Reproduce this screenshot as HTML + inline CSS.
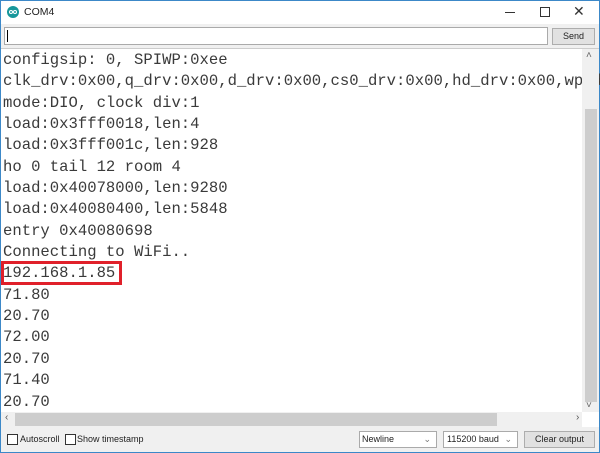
<!DOCTYPE html>
<html><head><style>
*{margin:0;padding:0;box-sizing:border-box}
body{width:600px;height:453px;overflow:hidden;background:#fff;font-family:"Liberation Sans",sans-serif;position:relative}
.win{position:absolute;left:0;top:0;width:600px;height:453px;border:1px solid #3c88c8;border-top:1px solid #3c88c8}
.abs{position:absolute}
.out{position:absolute;left:3px;top:50px;font-family:"Liberation Mono",monospace;font-size:15.6px;line-height:21.35px;color:#3a3a3a;white-space:pre}
</style></head><body>
<div class="win"></div>
<div class="abs" style="left:1px;top:1px;width:598px;height:23px;background:#fff"></div>
<div class="abs" style="left:7px;top:6px;width:12px;height:12px;border-radius:50%;background:#17979b"></div>
<div class="abs" style="left:9px;top:10px;width:4px;height:4px;border:1px solid #fff;border-radius:50%"></div>
<div class="abs" style="left:13px;top:10px;width:4px;height:4px;border:1px solid #fff;border-radius:50%"></div>
<div class="abs" style="left:24px;top:6px;font-size:10.5px;color:#222">COM4</div>
<div class="abs" style="left:505px;top:12px;width:10px;height:1px;background:#333"></div>
<div class="abs" style="left:540px;top:7px;width:10px;height:10px;border:1px solid #333"></div>
<div class="abs" style="left:573px;top:3px;font-size:14px;color:#333">✕</div>
<div class="abs" style="left:1px;top:24px;width:598px;height:24px;background:#f0f0f0"></div>
<div class="abs" style="left:4px;top:27px;width:544px;height:18px;background:#fff;border:1px solid #aaa"></div>
<div class="abs" style="left:7px;top:30px;width:1px;height:12px;background:#000"></div>
<div class="abs" style="left:552px;top:28px;width:43px;height:17px;background:#e1e1e1;border:1px solid #adadad;font-size:9px;text-align:center;line-height:15px;color:#222">Send</div>
<div class="abs" style="left:1px;top:48px;width:598px;height:1px;background:#ccc"></div>
<div class="out">configsip: 0, SPIWP:0xee
clk_drv:0x00,q_drv:0x00,d_drv:0x00,cs0_drv:0x00,hd_drv:0x00,wp_drv
mode:DIO, clock div:1
load:0x3fff0018,len:4
load:0x3fff001c,len:928
ho 0 tail 12 room 4
load:0x40078000,len:9280
load:0x40080400,len:5848
entry 0x40080698
Connecting to WiFi..
192.168.1.85
71.80
20.70
72.00
20.70
71.40
20.70</div>
<div class="abs" style="left:1px;top:261px;width:121px;height:24px;border:3px solid #e0202a"></div>
<div class="abs" style="left:582px;top:49px;width:17px;height:363px;background:#f0f0f0"></div>
<div class="abs" style="left:585px;top:109px;width:12px;height:293px;background:#cdcdcd"></div>
<div class="abs" style="left:586px;top:50px;font-size:10px;color:#666">˄</div>
<div class="abs" style="left:586px;top:400px;font-size:10px;color:#666">˅</div>
<div class="abs" style="left:1px;top:412px;width:581px;height:15px;background:#f0f0f0"></div>
<div class="abs" style="left:15px;top:413px;width:482px;height:13px;background:#cdcdcd"></div>
<div class="abs" style="left:5px;top:412px;font-size:10px;color:#555">‹</div>
<div class="abs" style="left:576px;top:412px;font-size:10px;color:#555">›</div>
<div class="abs" style="left:1px;top:427px;width:598px;height:25px;background:#f0f0f0"></div>
<div class="abs" style="left:7px;top:434px;width:11px;height:11px;border:1px solid #333;background:#fff"></div>
<div class="abs" style="left:20px;top:434px;font-size:9px;color:#222">Autoscroll</div>
<div class="abs" style="left:65px;top:434px;width:11px;height:11px;border:1px solid #333;background:#fff"></div>
<div class="abs" style="left:77px;top:434px;font-size:9px;color:#222">Show timestamp</div>
<div class="abs" style="left:359px;top:431px;width:78px;height:17px;background:#fff;border:1px solid #aaa;font-size:9px;line-height:15px;padding-left:2px;color:#222">Newline<span style="position:absolute;right:5px;color:#777">⌄</span></div>
<div class="abs" style="left:443px;top:431px;width:75px;height:17px;background:#fff;border:1px solid #aaa;font-size:9px;line-height:15px;padding-left:3px;color:#222">115200 baud<span style="position:absolute;right:5px;color:#777">⌄</span></div>
<div class="abs" style="left:524px;top:431px;width:71px;height:17px;background:#e1e1e1;border:1px solid #adadad;font-size:9px;text-align:center;line-height:15px;color:#222">Clear output</div>
</body></html>
